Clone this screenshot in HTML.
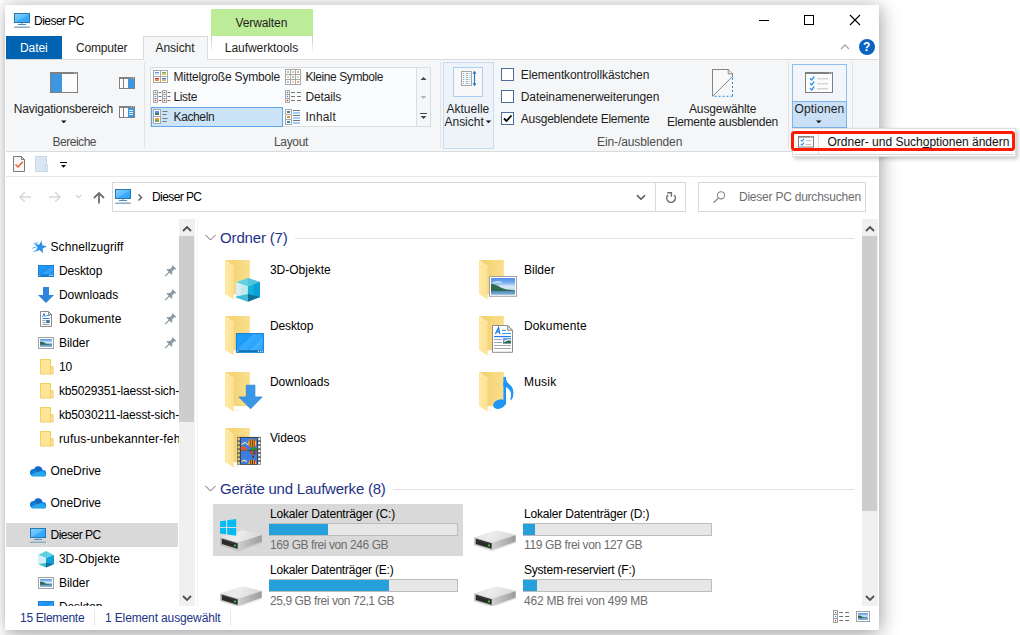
<!DOCTYPE html>
<html lang="de">
<head>
<meta charset="utf-8">
<title>Dieser PC</title>
<style>
*{box-sizing:border-box;margin:0;padding:0}
html,body{width:1020px;height:635px;overflow:hidden;background:#fff}
body{font-family:"Liberation Sans",sans-serif;font-size:12px;color:#000;position:relative}
.a{position:absolute}
.t{position:absolute;white-space:nowrap}
svg{position:absolute;overflow:visible}
#shadow{position:absolute;left:5px;top:5px;width:874px;height:625px;background:#fff;box-shadow:0 2px 19px rgba(0,0,0,.44)}
#win{position:absolute;left:5px;top:5px;width:874px;height:625px;background:#fff}
#root{position:absolute;left:0;top:0;width:1020px;height:635px}
#navclip{position:absolute;left:0;top:0;width:179px;height:606px;overflow:hidden}
.cb{position:absolute;width:13px;height:13px;border:1px solid #4d6c9a;background:#fff}
.bar{position:absolute;height:13px;background:#e6e6e6;border:1px solid #bcbcbc}
.bar i{position:absolute;left:-1px;top:0;bottom:0;background:#26a0da}
.hl{position:absolute;background:#e2e2e2;height:1px}
</style>
</head>
<body>
<div id="shadow"></div>
<div id="win"></div>
<div class="a" style="left:0;top:0;width:5px;height:635px;background:linear-gradient(90deg,rgba(255,255,255,.5),rgba(255,255,255,.2))"></div>
<div class="a" style="left:5px;top:0;width:1015px;height:5px;background:rgba(255,255,255,.22)"></div>
<div id="root">
<!-- ===== title bar ===== -->
<svg style="left:14px;top:13px" width="16" height="15" viewBox="14 13 16 15"><defs><linearGradient id="g1" x1="0" y1="0" x2="1" y2="1"><stop offset="0" stop-color="#86d0ff"/><stop offset="0.5" stop-color="#5cbcff"/><stop offset="0.55" stop-color="#3aacff"/><stop offset="1" stop-color="#2aa3fc"/></linearGradient></defs><rect x="14.5" y="13.5" width="15" height="9" fill="url(#g1)" stroke="#2878ae" stroke-width="1"/><rect x="21" y="23" width="2" height="1" fill="#9ec4dc"/><rect x="18" y="24" width="8" height="1" fill="#4f8cc0"/><rect x="16" y="26" width="12" height="0.6" fill="#d4dde4"/><rect x="14" y="26.6" width="16" height="1.3" fill="#8aa5bf"/></svg>

<div class="a" style="left:211px;top:9px;width:102px;height:27px;background:#bdec98"></div>
<!-- window buttons -->
<svg style="left:755px;top:10px" width="110" height="20" viewBox="755 10 110 20">
 <path d="M759 20.5H769" stroke="#000" stroke-width="1" fill="none"/>
 <rect x="804.5" y="15.5" width="9" height="9" stroke="#000" stroke-width="1" fill="none"/>
 <path d="M850 15L860 25M860 15L850 25" stroke="#000" stroke-width="1.1" fill="none"/>
</svg>
<!-- ===== tabs ===== -->
<div class="a" style="left:6px;top:36px;width:56px;height:23px;background:#0063b1"></div>
<div class="a" style="left:6px;top:59px;width:872px;height:1px;background:#dadbdc"></div>
<div class="a" style="left:143px;top:36px;width:65px;height:24px;background:#f5f6f7;border:1px solid #dadbdc;border-bottom:none"></div>
<div class="a" style="left:211px;top:36px;width:1px;height:18px;background:linear-gradient(#c4c4c4,#fff)"></div>
<div class="a" style="left:312px;top:36px;width:1px;height:18px;background:linear-gradient(#c4c4c4,#fff)"></div>
<svg style="left:838px;top:38px" width="40" height="20" viewBox="838 38 40 20">
 <path d="M841 49L845 45L849 49" stroke="#a6a6a6" stroke-width="1.3" fill="none"/>
 <circle cx="867" cy="47" r="8" fill="#0a63bf"/>
</svg>
<span class="t" style="left:863px;top:40px;font-size:12px;font-weight:bold;color:#fff;line-height:14px">?</span>
<!-- ===== ribbon ===== -->
<div class="a" style="left:6px;top:60px;width:872px;height:91px;background:#f5f6f7"></div>
<div class="a" style="left:6px;top:151px;width:872px;height:1px;background:#dadbdc"></div>
<div class="a" style="left:144px;top:62px;width:1px;height:86px;background:#e2e3e4"></div>
<div class="a" style="left:440px;top:62px;width:1px;height:86px;background:#e2e3e4"></div>
<div class="a" style="left:788px;top:62px;width:1px;height:86px;background:#e2e3e4"></div>
<div class="a" style="left:852px;top:62px;width:1px;height:86px;background:#e2e3e4"></div>
<!-- layout gallery -->
<div class="a" style="left:150px;top:67px;width:281px;height:60px;background:#fbfcfd;border:1px solid #dcddde"></div>
<div class="a" style="left:416px;top:67px;width:1px;height:60px;background:#dcddde"></div>
<div class="a" style="left:417px;top:68px;width:13px;height:58px;background:#f5f6f7"></div>
<div class="a" style="left:151px;top:107px;width:132px;height:20px;background:#cce4f7;border:1px solid #62a5e9"></div>
<svg style="left:417px;top:68px" width="13" height="58" viewBox="417 68 13 58">
 <path d="M420.5 80H426.5L423.5 77Z" fill="#444"/>
 <path d="M420.5 96H426.5L423.5 99Z" fill="#b5b5b5"/>
 <path d="M420 113.5H427" stroke="#444" stroke-width="1"/>
 <path d="M420.5 116H426.5L423.5 119Z" fill="#444"/>
</svg>
<svg style="left:153px;top:70px" width="16" height="14" viewBox="153 70 16 14"><rect x="153.5" y="70.5" width="7" height="6" fill="#fff" stroke="#a8a8a8" stroke-width="1"/><rect x="155" y="72" width="4" height="1.5" fill="#5a9ae6"/><rect x="155" y="73.5" width="4" height="1.5" fill="#dfe8f0"/><rect x="160.5" y="70.5" width="7" height="6" fill="#fff" stroke="#a8a8a8" stroke-width="1"/><rect x="162" y="72" width="4" height="1.5" fill="#7aa85a"/><rect x="162" y="73.5" width="4" height="1.5" fill="#e8c040"/><rect x="153.5" y="76.5" width="7" height="6" fill="#fff" stroke="#a8a8a8" stroke-width="1"/><rect x="155" y="78" width="4" height="1.5" fill="#d83020"/><rect x="155" y="79.5" width="4" height="1.5" fill="#f09030"/><rect x="160.5" y="76.5" width="7" height="6" fill="#fff" stroke="#a8a8a8" stroke-width="1"/><rect x="162" y="78" width="4" height="1.5" fill="#3a7ad8"/><rect x="162" y="79.5" width="4" height="1.5" fill="#e8c030"/></svg>
<svg style="left:153px;top:90px" width="17" height="14" viewBox="153 90 17 14"><rect x="153.5" y="90.5" width="4" height="4" fill="#fff" stroke="#a8a8a8" stroke-width="1"/><rect x="154.8" y="91.8" width="1.4" height="1.4" fill="#3a7a5a"/><rect x="158.5" y="92" width="3" height="1" fill="#777"/><rect x="153.5" y="94.5" width="4" height="4" fill="#fff" stroke="#a8a8a8" stroke-width="1"/><rect x="154.8" y="95.8" width="1.4" height="1.4" fill="#4a8af0"/><rect x="158.5" y="96" width="3" height="1" fill="#777"/><rect x="153.5" y="98.5" width="4" height="4" fill="#fff" stroke="#a8a8a8" stroke-width="1"/><rect x="154.8" y="99.8" width="1.4" height="1.4" fill="#d02020"/><rect x="158.5" y="100" width="3" height="1" fill="#777"/><rect x="162.5" y="90.5" width="4" height="4" fill="#fff" stroke="#a8a8a8" stroke-width="1"/><rect x="163.8" y="91.8" width="1.4" height="1.4" fill="#3a7a5a"/><rect x="167.5" y="92" width="3" height="1" fill="#777"/><rect x="162.5" y="94.5" width="4" height="4" fill="#fff" stroke="#a8a8a8" stroke-width="1"/><rect x="163.8" y="95.8" width="1.4" height="1.4" fill="#4a8af0"/><rect x="167.5" y="96" width="3" height="1" fill="#777"/><rect x="162.5" y="98.5" width="4" height="4" fill="#fff" stroke="#a8a8a8" stroke-width="1"/><rect x="163.8" y="99.8" width="1.4" height="1.4" fill="#d02020"/><rect x="167.5" y="100" width="3" height="1" fill="#777"/></svg>
<svg style="left:153px;top:109px" width="16" height="16" viewBox="153 109 16 16"><rect x="153.5" y="109.5" width="7" height="7" fill="#fff" stroke="#a8a8a8" stroke-width="1"/><rect x="155" y="111" width="4" height="2" fill="#5a9ae6"/><rect x="155" y="113" width="4" height="2" fill="#3f7a58"/><rect x="153.5" y="116.5" width="7" height="7" fill="#fff" stroke="#a8a8a8" stroke-width="1"/><rect x="155" y="118" width="4" height="2" fill="#e8a030"/><rect x="155" y="120" width="4" height="2" fill="#7aa85a"/><rect x="162.5" y="111" width="5" height="1" fill="#777"/><rect x="162.5" y="114" width="4" height="1" fill="#777"/><rect x="162.5" y="118" width="5" height="1" fill="#777"/><rect x="162.5" y="121" width="4" height="1" fill="#777"/></svg>
<svg style="left:285px;top:69px" width="16" height="16" viewBox="285 69 16 16"><rect x="285.5" y="69.5" width="5" height="5" fill="#fff" stroke="#a8a8a8" stroke-width="1"/><rect x="287.3" y="71.3" width="1.4" height="1.4" fill="#3a7a9a"/><rect x="290.5" y="69.5" width="5" height="5" fill="#fff" stroke="#a8a8a8" stroke-width="1"/><rect x="292.3" y="71.3" width="1.4" height="1.4" fill="#7aa85a"/><rect x="295.5" y="69.5" width="5" height="5" fill="#fff" stroke="#a8a8a8" stroke-width="1"/><rect x="297.3" y="71.3" width="1.4" height="1.4" fill="#d83020"/><rect x="285.5" y="74.5" width="5" height="5" fill="#fff" stroke="#a8a8a8" stroke-width="1"/><rect x="287.3" y="76.3" width="1.4" height="1.4" fill="#e0a030"/><rect x="290.5" y="74.5" width="5" height="5" fill="#fff" stroke="#a8a8a8" stroke-width="1"/><rect x="292.3" y="76.3" width="1.4" height="1.4" fill="#3a7ab8"/><rect x="295.5" y="74.5" width="5" height="5" fill="#fff" stroke="#a8a8a8" stroke-width="1"/><rect x="297.3" y="76.3" width="1.4" height="1.4" fill="#a8b850"/><rect x="285.5" y="79.5" width="5" height="5" fill="#fff" stroke="#a8a8a8" stroke-width="1"/><rect x="287.3" y="81.3" width="1.4" height="1.4" fill="#3a8ab8"/><rect x="290.5" y="79.5" width="5" height="5" fill="#fff" stroke="#a8a8a8" stroke-width="1"/><rect x="292.3" y="81.3" width="1.4" height="1.4" fill="#e09030"/><rect x="295.5" y="79.5" width="5" height="5" fill="#fff" stroke="#a8a8a8" stroke-width="1"/><rect x="297.3" y="81.3" width="1.4" height="1.4" fill="#d84020"/></svg>
<svg style="left:285px;top:90px" width="17" height="14" viewBox="285 90 17 14"><rect x="285.5" y="90.5" width="4" height="4" fill="#fff" stroke="#a8a8a8" stroke-width="1"/><rect x="286.8" y="91.8" width="1.4" height="1.4" fill="#3a7a5a"/><rect x="291" y="92" width="4" height="1" fill="#777"/><rect x="297" y="92" width="4" height="1" fill="#777"/><rect x="285.5" y="94.5" width="4" height="4" fill="#fff" stroke="#a8a8a8" stroke-width="1"/><rect x="286.8" y="95.8" width="1.4" height="1.4" fill="#4a8af0"/><rect x="291" y="96" width="4" height="1" fill="#777"/><rect x="297" y="96" width="4" height="1" fill="#777"/><rect x="285.5" y="98.5" width="4" height="4" fill="#fff" stroke="#a8a8a8" stroke-width="1"/><rect x="286.8" y="99.8" width="1.4" height="1.4" fill="#d02020"/><rect x="291" y="100" width="4" height="1" fill="#777"/><rect x="297" y="100" width="4" height="1" fill="#777"/></svg>
<svg style="left:285px;top:109px" width="16" height="16" viewBox="285 109 16 16"><rect x="285.5" y="109.5" width="6" height="5" fill="#fff" stroke="#a8a8a8"/><rect x="287" y="111" width="3" height="2" fill="#3a7a8a"/><rect x="285.5" y="114.5" width="6" height="5" fill="#fff" stroke="#a8a8a8"/><rect x="287" y="116" width="3" height="2" fill="#e09030"/><rect x="285.5" y="119.5" width="6" height="5" fill="#fff" stroke="#a8a8a8"/><rect x="287" y="121" width="3" height="2" fill="#3a8a9a"/><rect x="293" y="110" width="7" height="1" fill="#777"/><rect x="293" y="112.5" width="7" height="1" fill="#4a9af0"/><rect x="293" y="115" width="7" height="1" fill="#777"/><rect x="293" y="117.5" width="7" height="1" fill="#4a9af0"/><rect x="293" y="120" width="7" height="1" fill="#777"/><rect x="293" y="122.5" width="7" height="1" fill="#4a9af0"/></svg>

<!-- Aktuelle Ansicht -->
<div class="a" style="left:443px;top:62px;width:51px;height:87px;background:#eef3f9;border:1px solid #c5dcf1"></div>
<div class="a" style="left:453px;top:67px;width:30px;height:30px;background:#f8f8f9;border:1px solid #a8cff8"></div>
<svg style="left:484px;top:118px" width="10" height="8" viewBox="484 118 10 8"><path d="M485.8 120.4H491.2L488.5 123.2Z" fill="#111"/></svg>
<!-- checkboxes -->
<div class="cb" style="left:501px;top:68px"></div>
<div class="cb" style="left:501px;top:90px"></div>
<div class="cb" style="left:501px;top:112px"></div>
<svg style="left:501px;top:112px" width="13" height="13" viewBox="0 0 13 13"><path d="M3 6.5L5.5 9L10.5 3.5" stroke="#000" stroke-width="1.8" fill="none"/></svg>
<!-- Optionen -->
<div class="a" style="left:792px;top:64px;width:55px;height:38px;background:#f2f5f9;border:1px solid #8fbfee"></div>
<div class="a" style="left:792px;top:101px;width:55px;height:27px;background:#c9e0f7;border:1px solid #7eb4ea"></div>
<svg style="left:58px;top:118px" width="12" height="8" viewBox="58 118 12 8"><path d="M61 120.5H66.5L63.75 123.3Z" fill="#111"/></svg>
<svg style="left:813px;top:118px" width="12" height="8" viewBox="813 118 12 8"><path d="M816 120.5H821.5L818.75 123.3Z" fill="#111"/></svg>
<svg style="left:50px;top:72px" width="28" height="21" viewBox="50 72 28 21"><rect x="50.5" y="72.5" width="27" height="20" fill="#fcfcfc" stroke="#808080" stroke-width="1"/><rect x="50" y="72" width="28" height="2" fill="#808080"/><rect x="74" y="72.5" width="1" height="1" fill="#d8d8d8"/><rect x="76" y="72.5" width="1" height="1" fill="#d8d8d8"/><rect x="51" y="74" width="11" height="18" fill="#3c96e0"/></svg>
<svg style="left:119px;top:77px" width="16" height="12" viewBox="119 77 16 12"><rect x="119.5" y="77.5" width="15" height="11" fill="#fcfcfc" stroke="#808080" stroke-width="1"/><rect x="119" y="77" width="16" height="2" fill="#808080"/><rect x="131" y="77.5" width="1" height="1" fill="#d8d8d8"/><rect x="133" y="77.5" width="1" height="1" fill="#d8d8d8"/><rect x="123" y="79" width="1" height="9" fill="#808080"/><rect x="128" y="79" width="6" height="9" fill="#3c96e0"/></svg>
<svg style="left:119px;top:106px" width="16" height="12" viewBox="119 106 16 12"><rect x="119.5" y="106.5" width="15" height="11" fill="#fcfcfc" stroke="#808080" stroke-width="1"/><rect x="119" y="106" width="16" height="2" fill="#808080"/><rect x="131" y="106.5" width="1" height="1" fill="#d8d8d8"/><rect x="133" y="106.5" width="1" height="1" fill="#d8d8d8"/><rect x="123" y="108" width="1" height="9" fill="#808080"/><rect x="128" y="108" width="6" height="9" fill="#3c96e0"/><rect x="129" y="110" width="4" height="1" fill="#e8f2fc"/><rect x="129" y="112" width="4" height="1" fill="#e8f2fc"/><rect x="129" y="114" width="4" height="1" fill="#e8f2fc"/></svg>
<svg style="left:460px;top:70px" width="18" height="17" viewBox="460 70 18 17"><rect x="461.5" y="71.5" width="10" height="14" fill="#fff" stroke="#a6a6a6"/><rect x="463" y="73" width="1" height="1" fill="#a0a0a0"/><rect x="464.6" y="73" width="1" height="1" fill="#a8dcf8"/><rect x="466" y="73" width="2" height="1" fill="#a8a8a8"/><rect x="468.6" y="73" width="2" height="1" fill="#a8dcf8"/><rect x="463" y="75" width="1" height="1" fill="#a0a0a0"/><rect x="464.6" y="75" width="1" height="1" fill="#a8dcf8"/><rect x="466" y="75" width="2" height="1" fill="#a8a8a8"/><rect x="468.6" y="75" width="2" height="1" fill="#a8dcf8"/><rect x="463" y="77" width="1" height="1" fill="#a0a0a0"/><rect x="464.6" y="77" width="1" height="1" fill="#a8dcf8"/><rect x="466" y="77" width="2" height="1" fill="#a8a8a8"/><rect x="468.6" y="77" width="2" height="1" fill="#a8dcf8"/><rect x="463" y="79" width="1" height="1" fill="#a0a0a0"/><rect x="464.6" y="79" width="1" height="1" fill="#a8dcf8"/><rect x="466" y="79" width="2" height="1" fill="#a8a8a8"/><rect x="468.6" y="79" width="2" height="1" fill="#a8dcf8"/><rect x="463" y="81" width="1" height="1" fill="#a0a0a0"/><rect x="464.6" y="81" width="1" height="1" fill="#a8dcf8"/><rect x="466" y="81" width="2" height="1" fill="#a8a8a8"/><rect x="468.6" y="81" width="2" height="1" fill="#a8dcf8"/><rect x="463" y="83" width="1" height="1" fill="#a0a0a0"/><rect x="464.6" y="83" width="1" height="1" fill="#a8dcf8"/><rect x="466" y="83" width="2" height="1" fill="#a8a8a8"/><rect x="468.6" y="83" width="2" height="1" fill="#a8dcf8"/><path d="M474.5 72.5V84.5" stroke="#2a7ac8" stroke-width="1.2"/><path d="M472.9 73.4L474.5 71L476.1 73.4ZM472.9 83.6L474.5 86L476.1 83.6Z" fill="#2a7ac8" stroke="#2a7ac8" stroke-width="0.5"/></svg>
<svg style="left:711px;top:68px" width="23" height="30" viewBox="711 68 23 30"><path d="M712.5 96V69.5H728L732.5 74V77" fill="none" stroke="#808080" stroke-width="1"/><path d="M713 69.8H728L732.3 74V77L713 95.8Z" fill="#f9f9fa"/><path d="M712.5 96.2V69.5H728.2L732.5 73.8V77.2" fill="none" stroke="#848484" stroke-width="1"/><path d="M728.2 69.5V73.8H732.5" fill="#eee" stroke="#848484" stroke-width="1"/><path d="M732.5 76.5L712.5 96.3" stroke="#848484" stroke-width="1"/><path d="M732.5 78V96.3" stroke="#2a8ae6" stroke-width="1" stroke-dasharray="2 2"/><path d="M714.5 96.3H732.5" stroke="#2a8ae6" stroke-width="1" stroke-dasharray="2 2"/></svg>
<svg style="left:805px;top:72px" width="28" height="21" viewBox="805 72 28 21"><rect x="805.5" y="72.5" width="27" height="20" fill="#fcfcfc" stroke="#808080" stroke-width="1"/><rect x="805" y="72" width="28" height="2" fill="#808080"/><rect x="829" y="72.5" width="1" height="1" fill="#d8d8d8"/><rect x="831" y="72.5" width="1" height="1" fill="#d8d8d8"/><path d="M810 78.2L811.7 79.9L814.3 76.5" stroke="#2a96f0" stroke-width="1.3" fill="none"/><rect x="817" y="78.3" width="11" height="1" fill="#c4c4c4"/><path d="M810 83.2L811.7 84.9L814.3 81.5" stroke="#2a96f0" stroke-width="1.3" fill="none"/><rect x="817" y="83.3" width="11" height="1" fill="#c4c4c4"/><path d="M810 88.2L811.7 89.9L814.3 86.5" stroke="#2a96f0" stroke-width="1.3" fill="none"/><rect x="817" y="88.3" width="11" height="1" fill="#c4c4c4"/></svg>

<!-- ===== QAT ===== -->
<div class="a" style="left:6px;top:176px;width:872px;height:1px;background:#e6e6e6"></div>
<svg style="left:13px;top:156px" width="12" height="16" viewBox="13 156 12 16"><path d="M13.5 171.5V156.5H21.5L24.5 159.5V171.5Z" fill="#f8f8f8" stroke="#7a7a7a"/><path d="M21.5 156.5V159.5H24.5" fill="none" stroke="#7a7a7a"/><path d="M15.5 164.5L18 167L22.8 161.8" stroke="#f05a28" stroke-width="1.4" fill="none"/></svg>
<svg style="left:35px;top:156px" width="13" height="16" viewBox="35 156 13 16"><rect x="35.5" y="156.5" width="11" height="15" fill="#dbe6f4" stroke="#c6d8ec"/><rect x="45.5" y="165.5" width="2" height="6" fill="#e3ecf7" stroke="#c6d8ec"/></svg>
<svg style="left:60px;top:161px" width="8" height="8" viewBox="60 161 8 8"><rect x="60" y="162" width="7" height="1" fill="#000"/><path d="M61 165H66L63.5 167.8Z" fill="#000"/></svg>

<!-- ===== address bar ===== -->
<div class="a" style="left:112px;top:182px;width:574px;height:30px;border:1px solid #d9d9d9;background:#fff"></div>
<div class="a" style="left:655px;top:183px;width:1px;height:28px;background:#d9d9d9"></div>
<div class="a" style="left:698px;top:182px;width:168px;height:30px;border:1px solid #d9d9d9;background:#fff"></div>
<svg style="left:18px;top:190px" width="90" height="16" viewBox="18 190 90 16"><path d="M31 197H20M24.8 192.2L20 197L24.8 201.8" stroke="#d6d6d6" stroke-width="1.5" fill="none"/><path d="M49 197H60M55.2 192.2L60 197L55.2 201.8" stroke="#d6d6d6" stroke-width="1.5" fill="none"/><path d="M75.8 194.8L78.6 197.6L81.4 194.8" stroke="#d0d0d0" stroke-width="1.2" fill="none"/><path d="M99 203.5V193M94 198L99 193L104 198" stroke="#6e6e6e" stroke-width="1.8" fill="none"/></svg>
<svg style="left:115px;top:189px" width="16" height="15" viewBox="115 189 16 15"><defs><linearGradient id="g2" x1="0" y1="0" x2="1" y2="1"><stop offset="0" stop-color="#86d0ff"/><stop offset="0.5" stop-color="#5cbcff"/><stop offset="0.55" stop-color="#3aacff"/><stop offset="1" stop-color="#2aa3fc"/></linearGradient></defs><rect x="115.5" y="189.5" width="15" height="9" fill="url(#g2)" stroke="#2878ae" stroke-width="1"/><rect x="122" y="199" width="2" height="1" fill="#9ec4dc"/><rect x="119" y="200" width="8" height="1" fill="#4f8cc0"/><rect x="117" y="202" width="12" height="0.6" fill="#d4dde4"/><rect x="115" y="202.6" width="16" height="1.3" fill="#8aa5bf"/></svg>
<svg style="left:136px;top:192px" width="10" height="10" viewBox="136 192 10 10"><path d="M138.5 194.5L141.5 197.5L138.5 200.5" stroke="#555" stroke-width="1.4" fill="none"/></svg>
<svg style="left:635px;top:192px" width="12" height="10" viewBox="635 192 12 10"><path d="M637 195.2L641 199.2L645 195.2" stroke="#555" stroke-width="1.6" fill="none"/></svg>
<svg style="left:665px;top:191px" width="12" height="13" viewBox="665 191 12 13"><path d="M674.2 195.1A4.3 4.3 0 1 1 668.1 194.9" stroke="#6a6e72" stroke-width="1.5" fill="none"/><path d="M667.2 192.7H671.4V196.8" stroke="#6a6e72" stroke-width="1.4" fill="none"/></svg>
<svg style="left:713px;top:191px" width="13" height="13" viewBox="713 191 13 13"><circle cx="721" cy="195.3" r="3.6" stroke="#7a8a8a" stroke-width="1.1" fill="none"/><path d="M718.4 198L713.5 202.8" stroke="#8a8a7a" stroke-width="1.2"/></svg>

<!-- ===== nav pane ===== -->
<div class="a" style="left:6px;top:523px;width:172px;height:24px;background:#d9d9d9"></div>
<div class="a" style="left:179px;top:219px;width:16px;height:387px;background:#f0f0f0"></div>
<div class="a" style="left:179px;top:236px;width:15px;height:186px;background:#cdcdcd"></div>
<svg style="left:179px;top:219px" width="16" height="388" viewBox="179 219 16 388">
 <path d="M183 231L187 227L191 231" stroke="#505050" stroke-width="1.8" fill="none"/>
 <path d="M183 596L187 600L191 596" stroke="#505050" stroke-width="1.8" fill="none"/>
</svg>
<div class="a" style="left:197px;top:219px;width:1px;height:387px;background:#f3f3f3"></div>
<div id="navclip">
<span class="t" style="left:50.5px;top:239.0px;font-size:12px;line-height:16px;letter-spacing:0.08px;color:#000">Schnellzugriff</span>
<span class="t" style="left:58.9px;top:263.0px;font-size:12px;line-height:16px;letter-spacing:-0.09px;color:#000">Desktop</span>
<span class="t" style="left:58.9px;top:287.0px;font-size:12px;line-height:16px;letter-spacing:-0.01px;color:#000">Downloads</span>
<span class="t" style="left:58.9px;top:311.0px;font-size:12px;line-height:16px;letter-spacing:0.14px;color:#000">Dokumente</span>
<span class="t" style="left:58.9px;top:335.0px;font-size:12px;line-height:16px;letter-spacing:-0.01px;color:#000">Bilder</span>
<span class="t" style="left:58.9px;top:359.0px;font-size:12px;line-height:16px;letter-spacing:-0.13px;color:#000">10</span>
<span class="t" style="left:58.9px;top:383.0px;font-size:12px;line-height:16px;letter-spacing:-0.18px;color:#000">kb5029351-laesst-sich-</span>
<span class="t" style="left:58.9px;top:407.0px;font-size:12px;line-height:16px;letter-spacing:-0.14px;color:#000">kb5030211-laesst-sich-</span>
<span class="t" style="left:58.9px;top:431.0px;font-size:12px;line-height:16px;letter-spacing:0.17px;color:#000">rufus-unbekannter-feh</span>
<span class="t" style="left:50.5px;top:463.0px;font-size:12px;line-height:16px;letter-spacing:-0.02px;color:#000">OneDrive</span>
<span class="t" style="left:50.5px;top:495.0px;font-size:12px;line-height:16px;letter-spacing:-0.02px;color:#000">OneDrive</span>
<span class="t" style="left:50.5px;top:527.0px;font-size:12px;line-height:16px;letter-spacing:-0.49px;color:#000">Dieser PC</span>
<span class="t" style="left:58.9px;top:551.0px;font-size:12px;line-height:16px;letter-spacing:0.04px;color:#000">3D-Objekte</span>
<span class="t" style="left:58.9px;top:575.0px;font-size:12px;line-height:16px;letter-spacing:-0.01px;color:#000">Bilder</span>
<span class="t" style="left:58.9px;top:599.0px;font-size:12px;line-height:16px;letter-spacing:-0.09px;color:#000">Desktop</span>
<svg style="left:31.5px;top:241px" width="15" height="12" viewBox="31.5 241 15 12"><polygon points="41.1,240.7 41.9,245.3 46.4,246.4 42.2,248.6 42.5,253.2 39.2,249.9 34.9,251.7 37.0,247.5 34.1,244.0 38.6,244.7" fill="#2e8ee8"/><path d="M33.1 243.9l4.4 -1.2M31.7 248.2l3.8 -1M32.9 251.6l3.4 -1.6" stroke="#5aa8f0" stroke-width="1" fill="none"/></svg>
<svg style="left:38px;top:265px" width="16" height="12" viewBox="38 265 16 12"><defs><linearGradient id="g3" x1="0" y1="0" x2="1" y2="1"><stop offset="0" stop-color="#2a9cf8"/><stop offset="0.5" stop-color="#1e90f0"/><stop offset="0.52" stop-color="#36a4fa"/><stop offset="1" stop-color="#1e94f4"/></linearGradient></defs><rect x="38.5" y="265.5" width="15" height="11" fill="url(#g3)" stroke="#1a7fd6"/><rect x="39" y="274.6" width="14" height="1.2" fill="#0f6fb8"/><rect x="39.3" y="274.7" width="1" height="1" fill="#fff"/><rect x="49" y="274.7" width="1" height="1" fill="#fff"/><rect x="50.5" y="274.7" width="1" height="1" fill="#fff"/><rect x="52" y="274.7" width="1" height="1" fill="#fff"/></svg>
<svg style="left:164.7px;top:265.9px" width="11" height="11" viewBox="164.7 265.9 11 11"><g transform="translate(174.1 266.8) rotate(45)"><path d="M-2.5 0H2.5V1.4H1.6V4.6L3.5 6.6V7.6H0.6V13H-0.6V7.6H-3.5V6.6L-1.6 4.6V1.4H-2.5Z" fill="#8a9aa6"/></g></svg>
<svg style="left:38px;top:287.3px" width="16" height="16" viewBox="38 287.3 16 16"><path d="M43 287.3h6v8h5l-8 8l-8 -8h5z" fill="#2e86dc"/></svg>
<svg style="left:164.7px;top:289.9px" width="11" height="11" viewBox="164.7 289.9 11 11"><g transform="translate(174.1 290.8) rotate(45)"><path d="M-2.5 0H2.5V1.4H1.6V4.6L3.5 6.6V7.6H0.6V13H-0.6V7.6H-3.5V6.6L-1.6 4.6V1.4H-2.5Z" fill="#8a9aa6"/></g></svg>
<svg style="left:40px;top:311px" width="12" height="16" viewBox="40 311 12 16"><path d="M40.5 311.5h8l3 3v12h-11z" fill="#fff" stroke="#8a8a8a"/><path d="M48.5 311.5v3h3" fill="none" stroke="#8a8a8a"/><path d="M42.5 317l1.5 -3.5l1.2 3.5" stroke="#2a80e0" stroke-width="1" fill="none"/><rect x="46.5" y="315" width="3" height="1" fill="#3a90e8"/><rect x="42.5" y="318" width="7" height="1" fill="#2a80e0"/><rect x="42.5" y="320" width="3" height="1" fill="#9a9a9a"/><rect x="42.5" y="322" width="3" height="1" fill="#9a9a9a"/><rect x="42.5" y="324" width="7" height="1" fill="#9a9a9a"/><rect x="46.2" y="320" width="3.5" height="3" fill="#3a7a9a"/></svg>
<svg style="left:164.7px;top:313.9px" width="11" height="11" viewBox="164.7 313.9 11 11"><g transform="translate(174.1 314.8) rotate(45)"><path d="M-2.5 0H2.5V1.4H1.6V4.6L3.5 6.6V7.6H0.6V13H-0.6V7.6H-3.5V6.6L-1.6 4.6V1.4H-2.5Z" fill="#8a9aa6"/></g></svg>
<svg style="left:38px;top:337px" width="16" height="12" viewBox="38 337 16 12"><defs><linearGradient id="g4" x1="0" y1="0" x2="0" y2="1"><stop offset="0" stop-color="#4f8fe6"/><stop offset="0.45" stop-color="#d4e8f6"/><stop offset="0.7" stop-color="#6a9ac8"/><stop offset="1" stop-color="#8ab4d8"/></linearGradient></defs><rect x="38.5" y="337.5" width="15" height="11" fill="#fff" stroke="#a2a2a2"/><rect x="40" y="339" width="12" height="8" fill="url(#g4)"/><path d="M40 342.04q3 -0.8 6 1.76l6 0.96h-12z" fill="#2f6a50"/></svg>
<svg style="left:164.7px;top:337.9px" width="11" height="11" viewBox="164.7 337.9 11 11"><g transform="translate(174.1 338.8) rotate(45)"><path d="M-2.5 0H2.5V1.4H1.6V4.6L3.5 6.6V7.6H0.6V13H-0.6V7.6H-3.5V6.6L-1.6 4.6V1.4H-2.5Z" fill="#8a9aa6"/></g></svg>
<svg style="left:40px;top:359.3px" width="14" height="16" viewBox="40 359.3 14 16"><path d="M40.5 359.8h10v7h2.5v7.5h-12.5z" fill="#ffe596" stroke="#f2cd62"/><path d="M50.5 366.8v7" stroke="#f2cd62" fill="none"/></svg>
<svg style="left:40px;top:383.3px" width="14" height="16" viewBox="40 383.3 14 16"><path d="M40.5 383.8h10v7h2.5v7.5h-12.5z" fill="#ffe596" stroke="#f2cd62"/><path d="M50.5 390.8v7" stroke="#f2cd62" fill="none"/></svg>
<svg style="left:40px;top:407.3px" width="14" height="16" viewBox="40 407.3 14 16"><path d="M40.5 407.8h10v7h2.5v7.5h-12.5z" fill="#ffe596" stroke="#f2cd62"/><path d="M50.5 414.8v7" stroke="#f2cd62" fill="none"/></svg>
<svg style="left:40px;top:431.3px" width="14" height="16" viewBox="40 431.3 14 16"><path d="M40.5 431.8h10v7h2.5v7.5h-12.5z" fill="#ffe596" stroke="#f2cd62"/><path d="M50.5 438.8v7" stroke="#f2cd62" fill="none"/></svg>
<svg style="left:30px;top:465.5px" width="17" height="11" viewBox="30 465.5 17 11"><circle cx="38.2" cy="470.1" r="4.4" fill="#0f67c1"/><ellipse cx="33.6" cy="472.1" rx="3.6" ry="3.7" fill="#0f7ad6"/><circle cx="43" cy="472.7" r="3.2" fill="#1b8fe6"/><path d="M32.4 476q-1.5 -2.5 3 -4q4.5 -1.5 8 -0.5q3 1 2.8 3q-0.3 1.6 -2.5 1.6z" fill="#28a8ea"/></svg>
<svg style="left:30px;top:497.5px" width="17" height="11" viewBox="30 497.5 17 11"><circle cx="38.2" cy="502.1" r="4.4" fill="#0f67c1"/><ellipse cx="33.6" cy="504.1" rx="3.6" ry="3.7" fill="#0f7ad6"/><circle cx="43" cy="504.7" r="3.2" fill="#1b8fe6"/><path d="M32.4 508q-1.5 -2.5 3 -4q4.5 -1.5 8 -0.5q3 1 2.8 3q-0.3 1.6 -2.5 1.6z" fill="#28a8ea"/></svg>
<svg style="left:30px;top:527.7px" width="16" height="15" viewBox="30 527.7 16 15"><defs><linearGradient id="g5" x1="0" y1="0" x2="1" y2="1"><stop offset="0" stop-color="#86d0ff"/><stop offset="0.5" stop-color="#5cbcff"/><stop offset="0.55" stop-color="#3aacff"/><stop offset="1" stop-color="#2aa3fc"/></linearGradient></defs><rect x="30.5" y="528.2" width="15" height="9" fill="url(#g5)" stroke="#2878ae" stroke-width="1"/><rect x="37" y="537.7" width="2" height="1" fill="#9ec4dc"/><rect x="34" y="538.7" width="8" height="1" fill="#4f8cc0"/><rect x="32" y="540.7" width="12" height="0.6" fill="#d4dde4"/><rect x="30" y="541.3" width="16" height="1.3" fill="#8aa5bf"/></svg>
<svg style="left:38.4px;top:550.7px" width="16" height="17" viewBox="38.4 550.7 16 17"><polygon points="38.4,554.7 46.4,550.7 54.4,554.7 46.4,557.7" fill="#5fd0e2"/><polygon points="38.4,554.7 46.4,557.7 46.4,562.7 38.4,563.7" fill="#d4f0f6"/><polygon points="38.4,563.7 46.4,562.7 46.4,567.3" fill="#3bbcd2"/><polygon points="46.4,557.7 54.4,554.7 54.4,563.7 46.4,567.3" fill="#0fa2da"/><polygon points="46.4,562.7 54.4,563.7 46.4,567.3" fill="#0f6f98"/></svg>
<svg style="left:38px;top:577px" width="16" height="12" viewBox="38 577 16 12"><defs><linearGradient id="g6" x1="0" y1="0" x2="0" y2="1"><stop offset="0" stop-color="#4f8fe6"/><stop offset="0.45" stop-color="#d4e8f6"/><stop offset="0.7" stop-color="#6a9ac8"/><stop offset="1" stop-color="#8ab4d8"/></linearGradient></defs><rect x="38.5" y="577.5" width="15" height="11" fill="#fff" stroke="#a2a2a2"/><rect x="40" y="579" width="12" height="8" fill="url(#g6)"/><path d="M40 582.04q3 -0.8 6 1.76l6 0.96h-12z" fill="#2f6a50"/></svg>
<svg style="left:38px;top:601px" width="16" height="12" viewBox="38 601 16 12"><defs><linearGradient id="g7" x1="0" y1="0" x2="1" y2="1"><stop offset="0" stop-color="#2a9cf8"/><stop offset="0.5" stop-color="#1e90f0"/><stop offset="0.52" stop-color="#36a4fa"/><stop offset="1" stop-color="#1e94f4"/></linearGradient></defs><rect x="38.5" y="601.5" width="15" height="11" fill="url(#g7)" stroke="#1a7fd6"/><rect x="39" y="610.6" width="14" height="1.2" fill="#0f6fb8"/><rect x="39.3" y="610.7" width="1" height="1" fill="#fff"/><rect x="49" y="610.7" width="1" height="1" fill="#fff"/><rect x="50.5" y="610.7" width="1" height="1" fill="#fff"/><rect x="52" y="610.7" width="1" height="1" fill="#fff"/></svg>

</div>
<!-- ===== content ===== -->
<div class="hl" style="left:295px;top:238px;width:559px"></div>
<div class="hl" style="left:393px;top:489px;width:461px"></div>
<svg style="left:204px;top:232px" width="14" height="10" viewBox="204 232 14 10"><path d="M205.5 235L210.5 240L215.5 235" stroke="#6a6a6a" stroke-width="1" fill="none"/></svg>
<svg style="left:204px;top:483px" width="14" height="10" viewBox="204 483 14 10"><path d="M205.5 486L210.5 491L215.5 486" stroke="#6a6a6a" stroke-width="1" fill="none"/></svg>
<div class="a" style="left:213px;top:504px;width:250px;height:52px;background:#d9d9d9"></div>
<div class="bar" style="left:269px;top:523px;width:189px"><i style="width:59px"></i></div>
<div class="bar" style="left:269px;top:579px;width:189px"><i style="width:120px"></i></div>
<div class="bar" style="left:523px;top:523px;width:189px"><i style="width:12px"></i></div>
<div class="bar" style="left:523px;top:579px;width:189px"><i style="width:14px"></i></div>
<svg style="left:225px;top:259px" width="40" height="44" viewBox="225 259 40 44"><defs><linearGradient id="g8" x1="0" y1="0" x2="1" y2="0"><stop offset="0" stop-color="#f3d173"/><stop offset="0.45" stop-color="#f5d67b"/><stop offset="1" stop-color="#fbdf8c"/></linearGradient><linearGradient id="g9" x1="0" y1="0" x2="1" y2="0"><stop offset="0" stop-color="#ffe9a4"/><stop offset="1" stop-color="#fbe194"/></linearGradient></defs><path d="M225.2 260h24.6v34.2h-24.6z" fill="url(#g8)"/><path d="M225.2 260l8.4 6.4v33.2l-8.4 -5.6z" fill="url(#g9)"/><path d="M225.4 260.4l8.2 6.3" stroke="#fff3cc" stroke-width="0.8" fill="none"/><path d="M233.8 299.6l4 -1.2v-0.8z" fill="#d8dde4" opacity=".7"/><polygon points="235.9,282.3 247.9,278 260,282 247.9,286.4" fill="#62d2e3"/><polygon points="247.9,278 260,282 247.9,286.4" fill="#4fc6de"/><polygon points="235.9,282.3 247.9,286.4 247.9,294.1 235.9,296.6" fill="#d5f0f6"/><polygon points="240.9,284 247.9,286.4 247.9,294.1 240.9,295.5" fill="#bfe8f0"/><polygon points="235.9,296.6 247.9,294.1 247.9,301.7 235.9,297.6" fill="#3cbdd3"/><polygon points="247.9,286.4 260,282 260,297 247.9,301.7" fill="#13b0d8"/><polygon points="253.9,284.2 260,282 260,297 253.9,299.3" fill="#0b9fd9"/><polygon points="247.9,294.1 260,297 247.9,301.7" fill="#0f7099"/></svg>
<svg style="left:225px;top:315px" width="40" height="44" viewBox="225 315 40 44"><defs><linearGradient id="g10" x1="0" y1="0" x2="1" y2="0"><stop offset="0" stop-color="#f3d173"/><stop offset="0.45" stop-color="#f5d67b"/><stop offset="1" stop-color="#fbdf8c"/></linearGradient><linearGradient id="g11" x1="0" y1="0" x2="1" y2="0"><stop offset="0" stop-color="#ffe9a4"/><stop offset="1" stop-color="#fbe194"/></linearGradient></defs><path d="M225.2 316h24.6v34.2h-24.6z" fill="url(#g10)"/><path d="M225.2 316l8.4 6.4v33.2l-8.4 -5.6z" fill="url(#g11)"/><path d="M225.4 316.4l8.2 6.3" stroke="#fff3cc" stroke-width="0.8" fill="none"/><path d="M233.8 355.6l4 -1.2v-0.8z" fill="#d8dde4" opacity=".7"/><defs><linearGradient id="g12" x1="0" y1="0" x2="1" y2="0.7"><stop offset="0" stop-color="#22a0fb"/><stop offset="0.42" stop-color="#1e9af8"/><stop offset="0.44" stop-color="#38abfd"/><stop offset="0.75" stop-color="#2aa4fc"/><stop offset="0.77" stop-color="#44b2fe"/><stop offset="1" stop-color="#2ea6fc"/></linearGradient></defs><rect x="236.4" y="333.6" width="27" height="18.7" fill="url(#g12)" stroke="#0f7fd6" stroke-width="1"/><rect x="236.9" y="350.3" width="26" height="1.8" fill="#0b70b4"/><rect x="237.3" y="350.7" width="1.1" height="1.1" fill="#fff"/><rect x="257.9" y="350.7" width="1.1" height="1.1" fill="#fff"/><rect x="259.9" y="350.7" width="1.1" height="1.1" fill="#fff"/><rect x="261.7" y="350.7" width="1.1" height="1.1" fill="#fff"/></svg>
<svg style="left:225px;top:371px" width="40" height="44" viewBox="225 371 40 44"><defs><linearGradient id="g13" x1="0" y1="0" x2="1" y2="0"><stop offset="0" stop-color="#f3d173"/><stop offset="0.45" stop-color="#f5d67b"/><stop offset="1" stop-color="#fbdf8c"/></linearGradient><linearGradient id="g14" x1="0" y1="0" x2="1" y2="0"><stop offset="0" stop-color="#ffe9a4"/><stop offset="1" stop-color="#fbe194"/></linearGradient></defs><path d="M225.2 372h24.6v34.2h-24.6z" fill="url(#g13)"/><path d="M225.2 372l8.4 6.4v33.2l-8.4 -5.6z" fill="url(#g14)"/><path d="M225.4 372.4l8.2 6.3" stroke="#fff3cc" stroke-width="0.8" fill="none"/><path d="M233.8 411.6l4 -1.2v-0.8z" fill="#d8dde4" opacity=".7"/><path d="M246.3 385.2h8.6v11.8h7.3l-11.6 11.8l-11.7 -11.8h7.4z" fill="#3a96e6" stroke="#2f85d6" stroke-width="0.8"/></svg>
<svg style="left:225px;top:427px" width="40" height="44" viewBox="225 427 40 44"><defs><linearGradient id="g15" x1="0" y1="0" x2="1" y2="0"><stop offset="0" stop-color="#f3d173"/><stop offset="0.45" stop-color="#f5d67b"/><stop offset="1" stop-color="#fbdf8c"/></linearGradient><linearGradient id="g16" x1="0" y1="0" x2="1" y2="0"><stop offset="0" stop-color="#ffe9a4"/><stop offset="1" stop-color="#fbe194"/></linearGradient></defs><path d="M225.2 428h24.6v34.2h-24.6z" fill="url(#g15)"/><path d="M225.2 428l8.4 6.4v33.2l-8.4 -5.6z" fill="url(#g16)"/><path d="M225.4 428.4l8.2 6.3" stroke="#fff3cc" stroke-width="0.8" fill="none"/><path d="M233.8 467.6l4 -1.2v-0.8z" fill="#d8dde4" opacity=".7"/><rect x="237" y="436.9" width="24" height="27.9" fill="#6e6e6e"/><rect x="240.3" y="437.2" width="17.4" height="27.3" fill="#2a2a2a"/><rect x="240.9" y="437.8" width="16.2" height="12.6" fill="#3b7de2"/><rect x="240.9" y="451" width="16.2" height="13" fill="#3b7de2"/><rect x="237.7" y="438" width="2" height="2.2" fill="#f3d264"/><rect x="258.3" y="438" width="2" height="2.2" fill="#fff"/><rect x="237.7" y="442" width="2" height="2.2" fill="#f3d264"/><rect x="258.3" y="442" width="2" height="2.2" fill="#fff"/><rect x="237.7" y="446" width="2" height="2.2" fill="#f3d264"/><rect x="258.3" y="446" width="2" height="2.2" fill="#fff"/><rect x="237.7" y="450" width="2" height="2.2" fill="#f3d264"/><rect x="258.3" y="450" width="2" height="2.2" fill="#fff"/><rect x="237.7" y="454" width="2" height="2.2" fill="#f3d264"/><rect x="258.3" y="454" width="2" height="2.2" fill="#fff"/><rect x="237.7" y="458" width="2" height="2.2" fill="#f3d264"/><rect x="258.3" y="458" width="2" height="2.2" fill="#fff"/><rect x="237.7" y="462" width="2" height="2.2" fill="#f3d264"/><rect x="258.3" y="462" width="2" height="2.2" fill="#fff"/><ellipse cx="252.2" cy="443.2" rx="4" ry="4.2" fill="#f0d020"/><path d="M250.2 439.5v8M254.2 439.5v8" stroke="#c82020" stroke-width="1.3"/><path d="M252.2 439.1v8.4" stroke="#222" stroke-width="1"/><rect x="251.4" y="447.9" width="1.6" height="1.6" fill="#5a2a10"/><path d="M240.9 450.4h7l-3 -4q-2 -1 -4 0z" fill="#e05a30"/><path d="M250 450.4h7v-2.2q-3 -1.5 -7 0z" fill="#2f8a3a"/><path d="M241.5 444.4l3.5 -2l3 2.5" stroke="#e8e0a0" stroke-width="1.2" fill="none"/><path d="M249.6 451h7.4q-0.6 3.6 -3.7 4.4q-3.1 -0.8 -3.7 -4.4z" fill="#e03030"/><path d="M252.4 451v4.2" stroke="#20a040" stroke-width="1.4"/><path d="M254.4 451v3.6" stroke="#2040c0" stroke-width="1.2"/><rect x="252.4" y="455.9" width="1.6" height="1.8" fill="#5a2a10"/><path d="M248.6 464h7.6q0 -4 -3.8 -4.6q-3.8 0.6 -3.8 4.6z" fill="#f0d020"/><path d="M250.6 464v-3.8M254.4 464v-3.8" stroke="#c82020" stroke-width="1.3"/><path d="M252.4 464v-4.4" stroke="#222" stroke-width="1"/><path d="M241.5 461.4l3 -1.2l2.4 1.6" stroke="#e8e0a0" stroke-width="1.2" fill="none"/></svg>
<svg style="left:479px;top:259px" width="40" height="44" viewBox="479 259 40 44"><defs><linearGradient id="g17" x1="0" y1="0" x2="1" y2="0"><stop offset="0" stop-color="#f3d173"/><stop offset="0.45" stop-color="#f5d67b"/><stop offset="1" stop-color="#fbdf8c"/></linearGradient><linearGradient id="g18" x1="0" y1="0" x2="1" y2="0"><stop offset="0" stop-color="#ffe9a4"/><stop offset="1" stop-color="#fbe194"/></linearGradient></defs><path d="M479.2 260h24.6v34.2h-24.6z" fill="url(#g17)"/><path d="M479.2 260l8.4 6.4v33.2l-8.4 -5.6z" fill="url(#g18)"/><path d="M479.4 260.4l8.2 6.3" stroke="#fff3cc" stroke-width="0.8" fill="none"/><path d="M487.8 299.6l4 -1.2v-0.8z" fill="#d8dde4" opacity=".7"/><defs><linearGradient id="g19" x1="0" y1="0" x2="0" y2="1"><stop offset="0" stop-color="#4f8fe8"/><stop offset="0.28" stop-color="#79aeee"/><stop offset="0.5" stop-color="#d6e9f6"/><stop offset="0.74" stop-color="#c4dcec"/><stop offset="0.76" stop-color="#4f83b8"/><stop offset="1" stop-color="#86b4d8"/></linearGradient></defs><rect x="489.5" y="276.5" width="27" height="19.8" fill="#fff" stroke="#a2a2a2"/><rect x="491" y="278" width="24" height="16.8" fill="url(#g19)"/><path d="M491 284.048q2.88 -0.672 7.2 2.016q3.6 2.688 8.4 3.36l8.4 1.008v0.672h-24z" fill="#2f6a50"/><path d="M493.4 283.04q3.6 -2.016 8.4 -0.336" stroke="#e8f2fa" stroke-width="1.4" fill="none" opacity=".8"/></svg>
<svg style="left:479px;top:315px" width="40" height="44" viewBox="479 315 40 44"><defs><linearGradient id="g20" x1="0" y1="0" x2="1" y2="0"><stop offset="0" stop-color="#f3d173"/><stop offset="0.45" stop-color="#f5d67b"/><stop offset="1" stop-color="#fbdf8c"/></linearGradient><linearGradient id="g21" x1="0" y1="0" x2="1" y2="0"><stop offset="0" stop-color="#ffe9a4"/><stop offset="1" stop-color="#fbe194"/></linearGradient></defs><path d="M479.2 316h24.6v34.2h-24.6z" fill="url(#g20)"/><path d="M479.2 316l8.4 6.4v33.2l-8.4 -5.6z" fill="url(#g21)"/><path d="M479.4 316.4l8.2 6.3" stroke="#fff3cc" stroke-width="0.8" fill="none"/><path d="M487.8 355.6l4 -1.2v-0.8z" fill="#d8dde4" opacity=".7"/><path d="M492.5 325.5h15.2l4.8 4.8v22h-20z" fill="#fff" stroke="#8c8c8c"/><path d="M507.7 325.5v4.8h4.8z" fill="#e4e4e4" stroke="#8c8c8c"/><path d="M495.4 334l3.2 -6.4l1.2 6.4M496.2 331.8h3.4" stroke="#1f7fe0" stroke-width="1.3" fill="none"/><rect x="502" y="330" width="4" height="1" fill="#3aa0f0"/><rect x="502" y="333" width="9" height="1" fill="#3aa0f0"/><rect x="494" y="336" width="17" height="1.2" fill="#1f7fe0"/><rect x="494" y="339" width="8" height="1" fill="#a8a8a8"/><rect x="494" y="342" width="8" height="1" fill="#a8a8a8"/><rect x="494" y="345" width="17" height="1" fill="#a8a8a8"/><rect x="494" y="348" width="17" height="1" fill="#a8a8a8"/><rect x="503" y="338" width="8" height="5.6" fill="#2f6a58"/><path d="M503 338h8v2.4q-4 -0.5 -8 1.6z" fill="#6a9ae0"/><path d="M504 341.6l4 -2l3 0.6" stroke="#e0ecf4" stroke-width="1.2" fill="none"/></svg>
<svg style="left:479px;top:371px" width="40" height="44" viewBox="479 371 40 44"><defs><linearGradient id="g22" x1="0" y1="0" x2="1" y2="0"><stop offset="0" stop-color="#f3d173"/><stop offset="0.45" stop-color="#f5d67b"/><stop offset="1" stop-color="#fbdf8c"/></linearGradient><linearGradient id="g23" x1="0" y1="0" x2="1" y2="0"><stop offset="0" stop-color="#ffe9a4"/><stop offset="1" stop-color="#fbe194"/></linearGradient></defs><path d="M479.2 372h24.6v34.2h-24.6z" fill="url(#g22)"/><path d="M479.2 372l8.4 6.4v33.2l-8.4 -5.6z" fill="url(#g23)"/><path d="M479.4 372.4l8.2 6.3" stroke="#fff3cc" stroke-width="0.8" fill="none"/><path d="M487.8 411.6l4 -1.2v-0.8z" fill="#d8dde4" opacity=".7"/><ellipse cx="499.4" cy="404.1" rx="6.5" ry="4.5" transform="rotate(-22 499.4 404.1)" fill="#1f96f4"/><rect x="503.4" y="376.9" width="2.6" height="27.5" fill="#1f96f4"/><path d="M504.8 376.9q1.6 5.2 5.4 8.2q4.6 4.2 2.6 12.4l-1.4 2.6l-1.2 -0.8q2.4 -6.6 -1.6 -10.4q-2.6 -2.4 -5.6 -3.4z" fill="#1f96f4"/></svg>
<svg style="left:219px;top:518px" width="44" height="34" viewBox="219 518 44 34"><defs><linearGradient id="g24" x1="0" y1="0" x2="1" y2="0.2"><stop offset="0" stop-color="#e2e2e2"/><stop offset="0.5" stop-color="#ececec"/><stop offset="1" stop-color="#d8d8d8"/></linearGradient><linearGradient id="g25" x1="0" y1="0" x2="1" y2="0"><stop offset="0" stop-color="#cfcfcf"/><stop offset="1" stop-color="#9c9c9c"/></linearGradient></defs><path d="M220.2 544.6l18 5.6l23.8 -8.4v1.2l-23.8 8.6l-18 -5.8z" fill="#000" opacity=".08"/><polygon points="220.2,537.2 242.7,530.2 261.8,535.1 238.2,542.5" fill="url(#g24)"/><polygon points="238.2,542.5 261.8,535.1 261.8,541.7 238.2,550.3" fill="url(#g25)"/><polygon points="220.2,537.2 238.2,542.5 238.2,550.3 220.2,544.8" fill="#bdbdbd"/><polygon points="221.8,538.7 237.6,543.4 237.6,548.8 221.8,544.1" fill="#2b2b2b"/><polygon points="221.8,538.7 237.6,543.4 237.6,544.6 221.8,539.9" fill="#3a3a3a"/><rect x="233.9" y="544.6" width="2" height="1.8" fill="#35d24a"/><polygon points="220,521.3 226,520.5 226,527 220,527" fill="#00bcf2"/><polygon points="220,528 226,528 226,534.3 220,533.5" fill="#00bcf2"/><polygon points="227.2,520.3 236.2,519 236.2,527 227.2,527" fill="#00bcf2"/><polygon points="227.2,528 236.2,528 236.2,535.8 227.2,534.5" fill="#00bcf2"/></svg>
<svg style="left:219px;top:574px" width="44" height="34" viewBox="219 574 44 34"><defs><linearGradient id="g26" x1="0" y1="0" x2="1" y2="0.2"><stop offset="0" stop-color="#e2e2e2"/><stop offset="0.5" stop-color="#ececec"/><stop offset="1" stop-color="#d8d8d8"/></linearGradient><linearGradient id="g27" x1="0" y1="0" x2="1" y2="0"><stop offset="0" stop-color="#cfcfcf"/><stop offset="1" stop-color="#9c9c9c"/></linearGradient></defs><path d="M220.2 600.6l18 5.6l23.8 -8.4v1.2l-23.8 8.6l-18 -5.8z" fill="#000" opacity=".08"/><polygon points="220.2,593.2 242.7,586.2 261.8,591.1 238.2,598.5" fill="url(#g26)"/><polygon points="238.2,598.5 261.8,591.1 261.8,597.7 238.2,606.3" fill="url(#g27)"/><polygon points="220.2,593.2 238.2,598.5 238.2,606.3 220.2,600.8" fill="#bdbdbd"/><polygon points="221.8,594.7 237.6,599.4 237.6,604.8 221.8,600.1" fill="#2b2b2b"/><polygon points="221.8,594.7 237.6,599.4 237.6,600.6 221.8,595.9" fill="#3a3a3a"/><rect x="233.9" y="600.6" width="2" height="1.8" fill="#35d24a"/></svg>
<svg style="left:473px;top:518px" width="44" height="34" viewBox="473 518 44 34"><defs><linearGradient id="g28" x1="0" y1="0" x2="1" y2="0.2"><stop offset="0" stop-color="#e2e2e2"/><stop offset="0.5" stop-color="#ececec"/><stop offset="1" stop-color="#d8d8d8"/></linearGradient><linearGradient id="g29" x1="0" y1="0" x2="1" y2="0"><stop offset="0" stop-color="#cfcfcf"/><stop offset="1" stop-color="#9c9c9c"/></linearGradient></defs><path d="M474.2 544.6l18 5.6l23.8 -8.4v1.2l-23.8 8.6l-18 -5.8z" fill="#000" opacity=".08"/><polygon points="474.2,537.2 496.7,530.2 515.8,535.1 492.2,542.5" fill="url(#g28)"/><polygon points="492.2,542.5 515.8,535.1 515.8,541.7 492.2,550.3" fill="url(#g29)"/><polygon points="474.2,537.2 492.2,542.5 492.2,550.3 474.2,544.8" fill="#bdbdbd"/><polygon points="475.8,538.7 491.6,543.4 491.6,548.8 475.8,544.1" fill="#2b2b2b"/><polygon points="475.8,538.7 491.6,543.4 491.6,544.6 475.8,539.9" fill="#3a3a3a"/><rect x="487.9" y="544.6" width="2" height="1.8" fill="#35d24a"/></svg>
<svg style="left:473px;top:574px" width="44" height="34" viewBox="473 574 44 34"><defs><linearGradient id="g30" x1="0" y1="0" x2="1" y2="0.2"><stop offset="0" stop-color="#e2e2e2"/><stop offset="0.5" stop-color="#ececec"/><stop offset="1" stop-color="#d8d8d8"/></linearGradient><linearGradient id="g31" x1="0" y1="0" x2="1" y2="0"><stop offset="0" stop-color="#cfcfcf"/><stop offset="1" stop-color="#9c9c9c"/></linearGradient></defs><path d="M474.2 600.6l18 5.6l23.8 -8.4v1.2l-23.8 8.6l-18 -5.8z" fill="#000" opacity=".08"/><polygon points="474.2,593.2 496.7,586.2 515.8,591.1 492.2,598.5" fill="url(#g30)"/><polygon points="492.2,598.5 515.8,591.1 515.8,597.7 492.2,606.3" fill="url(#g31)"/><polygon points="474.2,593.2 492.2,598.5 492.2,606.3 474.2,600.8" fill="#bdbdbd"/><polygon points="475.8,594.7 491.6,599.4 491.6,604.8 475.8,600.1" fill="#2b2b2b"/><polygon points="475.8,594.7 491.6,599.4 491.6,600.6 475.8,595.9" fill="#3a3a3a"/><rect x="487.9" y="600.6" width="2" height="1.8" fill="#35d24a"/></svg>

<div class="a" style="left:862px;top:219px;width:16px;height:387px;background:#f0f0f0"></div>
<div class="a" style="left:862px;top:236px;width:15px;height:275px;background:#cdcdcd"></div>
<svg style="left:862px;top:219px" width="16" height="388" viewBox="862 219 16 388">
 <path d="M866 231L870 227L874 231" stroke="#505050" stroke-width="1.8" fill="none"/>
 <path d="M866 596L870 600L874 596" stroke="#505050" stroke-width="1.8" fill="none"/>
</svg>
<!-- ===== texts ===== -->
<span class="t" style="left:34.1px;top:13.0px;font-size:12px;line-height:16px;letter-spacing:-0.54px;color:#000">Dieser PC</span>
<span class="t" style="left:235.5px;top:15.0px;font-size:12px;line-height:16px;letter-spacing:-0.11px;color:#1e1e1e">Verwalten</span>
<span class="t" style="left:20.0px;top:40.0px;font-size:12px;line-height:16px;letter-spacing:-0.06px;color:#fff">Datei</span>
<span class="t" style="left:75.9px;top:40.0px;font-size:12px;line-height:16px;letter-spacing:-0.16px;color:#1e1e1e">Computer</span>
<span class="t" style="left:155.5px;top:40.0px;font-size:12px;line-height:16px;letter-spacing:-0.05px;color:#1e1e1e">Ansicht</span>
<span class="t" style="left:224.8px;top:40.0px;font-size:12px;line-height:16px;letter-spacing:-0.05px;color:#1e1e1e">Laufwerktools</span>
<span class="t" style="left:13.8px;top:101.0px;font-size:12px;line-height:16px;letter-spacing:-0.16px;color:#1e1e1e">Navigationsbereich</span>
<span class="t" style="left:52.5px;top:134.0px;font-size:12px;line-height:16px;letter-spacing:-0.48px;color:#4c4c4c">Bereiche</span>
<span class="t" style="left:173.5px;top:69.0px;font-size:12px;line-height:16px;letter-spacing:-0.19px;color:#1e1e1e">Mittelgroße Symbole</span>
<span class="t" style="left:173.5px;top:89.0px;font-size:12px;line-height:16px;letter-spacing:-0.37px;color:#1e1e1e">Liste</span>
<span class="t" style="left:173.5px;top:109.0px;font-size:12px;line-height:16px;letter-spacing:-0.37px;color:#1e1e1e">Kacheln</span>
<span class="t" style="left:305.5px;top:69.0px;font-size:12px;line-height:16px;letter-spacing:-0.42px;color:#1e1e1e">Kleine Symbole</span>
<span class="t" style="left:305.5px;top:89.0px;font-size:12px;line-height:16px;letter-spacing:-0.17px;color:#1e1e1e">Details</span>
<span class="t" style="left:305.5px;top:109.0px;font-size:12px;line-height:16px;letter-spacing:0.19px;color:#1e1e1e">Inhalt</span>
<span class="t" style="left:274.0px;top:134.0px;font-size:12px;line-height:16px;letter-spacing:-0.34px;color:#4c4c4c">Layout</span>
<span class="t" style="left:446.5px;top:101.0px;font-size:12px;line-height:16px;letter-spacing:0.01px;color:#1e1e1e">Aktuelle</span>
<span class="t" style="left:444.5px;top:114.0px;font-size:12px;line-height:16px;letter-spacing:-0.02px;color:#1e1e1e">Ansicht</span>
<span class="t" style="left:520.8px;top:67.0px;font-size:12px;line-height:16px;letter-spacing:-0.10px;color:#1e1e1e">Elementkontrollkästchen</span>
<span class="t" style="left:520.8px;top:89.0px;font-size:12px;line-height:16px;letter-spacing:-0.10px;color:#1e1e1e">Dateinamenerweiterungen</span>
<span class="t" style="left:520.8px;top:111.0px;font-size:12px;line-height:16px;letter-spacing:-0.25px;color:#1e1e1e">Ausgeblendete Elemente</span>
<span class="t" style="left:597.0px;top:134.0px;font-size:12px;line-height:16px;letter-spacing:-0.10px;color:#4c4c4c">Ein-/ausblenden</span>
<span class="t" style="left:689.0px;top:101.0px;font-size:12px;line-height:16px;letter-spacing:-0.13px;color:#1e1e1e">Ausgewählte</span>
<span class="t" style="left:667.0px;top:114.0px;font-size:12px;line-height:16px;letter-spacing:-0.27px;color:#1e1e1e">Elemente ausblenden</span>
<span class="t" style="left:794.5px;top:101.0px;font-size:12px;line-height:16px;letter-spacing:0.14px;color:#1e1e1e">Optionen</span>
<span class="t" style="left:152.0px;top:189.0px;font-size:12px;line-height:16px;letter-spacing:-0.58px;color:#000">Dieser PC</span>
<span class="t" style="left:739.0px;top:189.0px;font-size:12px;line-height:16px;letter-spacing:-0.23px;color:#6d6d6d">Dieser PC durchsuchen</span>
<span class="t" style="left:220.1px;top:228.0px;font-size:15px;line-height:19px;letter-spacing:-0.18px;color:#1e3287">Ordner (7)</span>
<span class="t" style="left:220.0px;top:479.0px;font-size:15px;line-height:19px;letter-spacing:-0.22px;color:#1e3287">Geräte und Laufwerke (8)</span>
<span class="t" style="left:269.9px;top:262.0px;font-size:12px;line-height:16px;letter-spacing:0.01px;color:#000">3D-Objekte</span>
<span class="t" style="left:269.9px;top:318.0px;font-size:12px;line-height:16px;letter-spacing:-0.10px;color:#000">Desktop</span>
<span class="t" style="left:269.9px;top:374.0px;font-size:12px;line-height:16px;letter-spacing:0.03px;color:#000">Downloads</span>
<span class="t" style="left:269.9px;top:430.0px;font-size:12px;line-height:16px;letter-spacing:-0.06px;color:#000">Videos</span>
<span class="t" style="left:523.9px;top:262.0px;font-size:12px;line-height:16px;letter-spacing:0.04px;color:#000">Bilder</span>
<span class="t" style="left:523.9px;top:318.0px;font-size:12px;line-height:16px;letter-spacing:0.19px;color:#000">Dokumente</span>
<span class="t" style="left:523.9px;top:374.0px;font-size:12px;line-height:16px;letter-spacing:0.25px;color:#000">Musik</span>
<span class="t" style="left:270.0px;top:506.0px;font-size:12px;line-height:16px;letter-spacing:-0.18px;color:#000">Lokaler Datenträger (C:)</span>
<span class="t" style="left:270.0px;top:537.0px;font-size:12px;line-height:16px;letter-spacing:-0.42px;color:#6d6d6d">169 GB frei von 246 GB</span>
<span class="t" style="left:270.0px;top:562.0px;font-size:12px;line-height:16px;letter-spacing:-0.22px;color:#000">Lokaler Datenträger (E:)</span>
<span class="t" style="left:270.0px;top:593.0px;font-size:12px;line-height:16px;letter-spacing:-0.42px;color:#6d6d6d">25,9 GB frei von 72,1 GB</span>
<span class="t" style="left:524.0px;top:506.0px;font-size:12px;line-height:16px;letter-spacing:-0.17px;color:#000">Lokaler Datenträger (D:)</span>
<span class="t" style="left:524.0px;top:537.0px;font-size:12px;line-height:16px;letter-spacing:-0.38px;color:#6d6d6d">119 GB frei von 127 GB</span>
<span class="t" style="left:524.0px;top:562.0px;font-size:12px;line-height:16px;letter-spacing:-0.21px;color:#000">System-reserviert (F:)</span>
<span class="t" style="left:524.0px;top:593.0px;font-size:12px;line-height:16px;letter-spacing:-0.22px;color:#6d6d6d">462 MB frei von 499 MB</span>
<!-- ===== status bar ===== -->
<div class="a" style="left:6px;top:606px;width:872px;height:23px;background:#fff"></div>
<div class="a" style="left:94px;top:610px;width:1px;height:16px;background:#e8e8e8"></div>
<div class="a" style="left:230px;top:610px;width:1px;height:16px;background:#e8e8e8"></div>
<span class="t" style="left:20.0px;top:610.0px;font-size:12px;line-height:16px;letter-spacing:-0.28px;color:#1e3287">15 Elemente</span>
<span class="t" style="left:105.0px;top:610.0px;font-size:12px;line-height:16px;letter-spacing:-0.13px;color:#1e3287">1 Element ausgewählt</span>
<svg style="left:833px;top:610px" width="17" height="14" viewBox="833 610 17 14"><rect x="833.5" y="610.5" width="4" height="4" fill="#fff" stroke="#9c9c9c"/><rect x="835" y="612" width="1.2" height="1.2" fill="#3a7a5a"/><rect x="839.3" y="612" width="3.8" height="1" fill="#6c6c6c"/><rect x="845.2" y="612" width="3.8" height="1" fill="#6c6c6c"/><rect x="833.5" y="614.5" width="4" height="4" fill="#fff" stroke="#9c9c9c"/><rect x="835" y="616" width="1.2" height="1.2" fill="#4a8af0"/><rect x="839.3" y="616" width="3.8" height="1" fill="#6c6c6c"/><rect x="845.2" y="616" width="3.8" height="1" fill="#6c6c6c"/><rect x="833.5" y="618.5" width="4" height="4" fill="#fff" stroke="#9c9c9c"/><rect x="835" y="620" width="1.2" height="1.2" fill="#d02020"/><rect x="839.3" y="620" width="3.8" height="1" fill="#6c6c6c"/><rect x="845.2" y="620" width="3.8" height="1" fill="#6c6c6c"/></svg>
<svg style="left:856px;top:611px" width="14" height="11" viewBox="856 611 14 11"><defs><linearGradient id="g32" x1="0" y1="0" x2="0" y2="1"><stop offset="0" stop-color="#4f8fe6"/><stop offset="0.45" stop-color="#d4e8f6"/><stop offset="0.7" stop-color="#6a9ac8"/><stop offset="1" stop-color="#8ab4d8"/></linearGradient></defs><rect x="856.5" y="611.5" width="13" height="10" fill="#fff" stroke="#a2a2a2"/><rect x="858" y="613" width="10" height="7" fill="url(#g32)"/><path d="M858 615.66q2.5 -0.7 5 1.54l5 0.84h-10z" fill="#2f6a50"/></svg>

<!-- ===== dropdown menu ===== -->
<div class="a" style="left:792px;top:128px;width:224px;height:29px;background:#fcfcfc;border:1px solid #dedede;box-shadow:2px 2px 4px rgba(0,0,0,.22)"></div>
<div class="a" style="left:818px;top:130px;width:1px;height:24px;background:#dcdcdc"></div>
<div class="a" style="left:794px;top:154px;width:220px;height:1px;background:#d6d6d6"></div>
<div class="a" style="left:791px;top:131px;width:224px;height:20px;border:3px solid #ff1a05;border-radius:3.5px"></div>
<svg style="left:798px;top:136px" width="16" height="12" viewBox="798 136 16 12"><rect x="798.5" y="136.5" width="15" height="10.6" fill="#fcfcfc" stroke="#808080" stroke-width="1"/><rect x="798" y="136" width="16" height="1.6" fill="#808080"/><rect x="810" y="136.5" width="1" height="1" fill="#d8d8d8"/><rect x="812" y="136.5" width="1" height="1" fill="#d8d8d8"/><path d="M800.8 140.1L802 141.3L804 138.9" stroke="#2a96f0" stroke-width="1.1" fill="none"/><rect x="806" y="140.1" width="5" height="1" fill="#b8b8b8"/><path d="M800.8 143.9L802 145.1L804 142.7" stroke="#2a96f0" stroke-width="1.1" fill="none"/><rect x="806" y="143.9" width="5" height="1" fill="#b8b8b8"/></svg>

<span class="t" style="left:827.5px;top:134.0px;font-size:12px;line-height:16px;letter-spacing:-0.01px;color:#111">Ordner- und Such<span style="text-decoration:underline">o</span>ptionen ändern</span>

</div>
</body>
</html>
